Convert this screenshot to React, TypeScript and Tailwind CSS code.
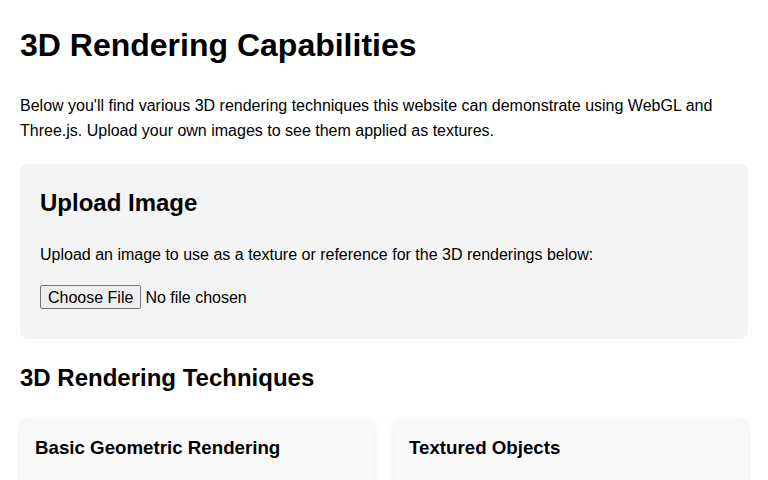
const TECHNIQUES = ['Basic Geometric Rendering', 'Textured Objects']

export default function App() {
  return (
    <div className="min-h-screen bg-white p-5 font-['Liberation_Sans',Arial,sans-serif] text-black">
      <h1 className="mb-[21.44px] text-[32px] font-bold leading-[1.6]">3D Rendering Capabilities</h1>
      <p className="mb-5 text-base leading-[1.6]">
        Below you'll find various 3D rendering techniques this website can demonstrate using WebGL and Three.js. Upload
        your own images to see them applied as textures.
      </p>

      {/* Upload panel */}
      <div className="rounded-lg bg-[#f4f4f4] p-5">
        <h2 className="mb-[19.92px] text-2xl font-bold leading-[1.6]">Upload Image</h2>
        <p className="text-base leading-[1.6]">
          Upload an image to use as a texture or reference for the 3D renderings below:
        </p>
        <input
          type="file"
          accept="image/*"
          className="mb-[10px] mt-[17px] block h-6 text-base leading-[18px] file:mr-[4px] file:h-6 file:rounded-[2px] file:border file:border-[#767676] file:bg-[#efefef] file:px-[7px] file:text-base file:text-black"
        />
      </div>

      <h2 className="mb-[21px] mt-5 text-2xl font-bold leading-[1.6]">3D Rendering Techniques</h2>

      <div className="grid grid-cols-2 gap-5">
        {TECHNIQUES.map(t => (
          <div key={t} className="rounded-lg bg-[#f9f9f9] p-[15px] shadow-[0_2px_5px_rgba(0,0,0,0.1)]">
            <h3 className="text-[18.72px] font-bold leading-[1.6]">{t}</h3>
            {/* render target */}
            <div className="mt-5 h-[200px] rounded bg-[#eeeeee]" />
          </div>
        ))}
      </div>
    </div>
  )
}
